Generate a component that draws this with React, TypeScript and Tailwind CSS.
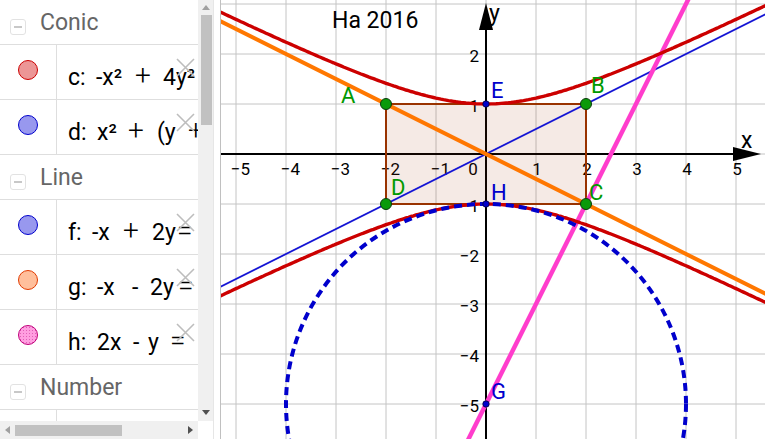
import React from "react";

const X = (x: number) => 486 + 50 * x;
const Y = (y: number) => 154 - 50 * y;

const hyperbola = (sign: number) => {
  const pts: string[] = [];
  for (let x = -5.5; x <= 5.7; x += 0.05) {
    const y = sign * Math.sqrt(1 + (x * x) / 4);
    pts.push(`${X(x).toFixed(1)},${Y(y).toFixed(1)}`);
  }
  return "M" + pts.join(" L");
};

type Token = { t: string; w?: number; op?: boolean };

const Swatch = ({ kind }: { kind: string }) => {
  const cls: Record<string, string> = {
    red: "bg-[#ec9696] border-[#cc0000]",
    blue: "bg-[#9898ee] border-[#0000cc]",
    orange: "bg-[#ffbf9c] border-[#e23a00]",
    pink: "bg-[#ff9ee0] border-[#c0007a] bg-[radial-gradient(circle,#e060b8_0.7px,transparent_0.9px)] bg-[length:3px_3px]",
  };
  return <div className={`h-[20px] w-[20px] rounded-full border ${cls[kind]}`} />;
};

const DeleteX = () => (
  <svg className="absolute left-[176px] top-[13px]" width="19" height="19" viewBox="0 0 19 19">
    <path d="M1 1 L18 18 M18 1 L1 18" stroke="#bdbdbd" strokeWidth="1.6" />
  </svg>
);

const ItemRow = ({ kind, tokens }: { kind: string; tokens: Token[] }) => (
  <div className="relative flex h-[55px] border-b border-[#dedede]">
    <div className="flex w-[57px] shrink-0 items-start justify-center border-r border-[#dedede] pt-[15px] pr-[1px]">
      <Swatch kind={kind} />
    </div>
    <div className="flex flex-1 items-baseline overflow-hidden whitespace-nowrap pl-[11px] pt-[17px] text-[23px] leading-[28px] text-black">
      {tokens.map((tk, i) => (
        <span
          key={i}
          className={tk.op ? "inline-block shrink-0 text-[28px] font-light" : "inline-block shrink-0"}
          style={tk.w ? { width: tk.w } : undefined}
        >
          {tk.t}
        </span>
      ))}
    </div>
    <DeleteX />
  </div>
);

const Header = ({ label }: { label: string }) => (
  <div className="flex h-[45px] items-start border-b border-[#dedede] pt-[8px]">
    <div className="ml-[10px] mt-[11px] flex h-[16px] w-[16px] items-center justify-center rounded-[3px] border border-[#e2e2e2]">
      <div className="h-[1.5px] w-[8px] bg-[#c8c8c8]" />
    </div>
    <span className="ml-[14px] text-[23px] leading-[29px] text-[#666666]">{label}</span>
  </div>
);

const Graphics = () => {
  const vx = [236, 286, 336, 386, 436, 486, 536, 586, 636, 686, 736];
  const hy = [4, 54, 104, 154, 204, 254, 304, 354, 404];
  const xLabels = [-5, -4, -3, -2, -1, 1, 2, 3, 4, 5];
  const yLabels = [2, 1, -1, -2, -3, -4, -5];
  return (
    <svg width="544" height="439" viewBox="221 0 544 439" className="block bg-white" style={{ fontFamily: "Roboto, 'Noto Sans', sans-serif" }}>
      {vx.map((x) => (
        <line key={"v" + x} x1={x} y1={0} x2={x} y2={439} stroke="#c4c4c4" strokeWidth="1" />
      ))}
      {hy.map((y) => (
        <line key={"h" + y} x1={221} y1={y} x2={765} y2={y} stroke="#c4c4c4" strokeWidth="1" />
      ))}
      {/* axes */}
      <line x1={221} y1={154} x2={740} y2={154} stroke="#000" strokeWidth="2" />
      <polygon points="761,154 733,147 733,161" fill="#000" />
      <line x1={486} y1={439} x2={486} y2={24} stroke="#000" strokeWidth="2" />
      <polygon points="486,3 479,30 493,30" fill="#000" />
      {xLabels.map((v) => (
        <text key={"xl" + v} x={X(v) + (v < 0 ? 4.5 : 1)} y={175} fontSize="17" textAnchor="middle" fill="#000">
          {v < 0 ? "\u2212" + -v : v}
        </text>
      ))}
      <text x={473} y={175} fontSize="17" textAnchor="middle" fill="#000">0</text>
      {yLabels.map((v) => (
        <text key={"yl" + v} x={479} y={Y(v) + 8} fontSize="17" textAnchor="end" fill="#000">
          {v < 0 ? "\u2212" + -v : v}
        </text>
      ))}
      <text x={489} y={21} fontSize="23" fill="#000">y</text>
      <text x={741} y={148} fontSize="23" fill="#000">x</text>
      <text x={332} y={28} fontSize="23" fill="#000">Ha 2016</text>

      {/* rectangle ABCD */}
      <polygon points={`${X(-2)},${Y(1)} ${X(2)},${Y(1)} ${X(2)},${Y(-1)} ${X(-2)},${Y(-1)}`} fill="rgba(153,51,0,0.1)" stroke="#993300" strokeWidth="2" />

      {/* lines */}
      <line x1={X(-5.5)} y1={Y(-2.75)} x2={X(5.6)} y2={Y(2.8)} stroke="#1414d4" strokeWidth="1.8" />
      <line x1={X(-5.5)} y1={Y(2.75)} x2={X(5.6)} y2={Y(-2.8)} stroke="#ff7700" strokeWidth="4" />
      <line x1={X(4.2)} y1={Y(3.4)} x2={X(-0.5)} y2={Y(-6)} stroke="#ff3dcc" strokeWidth="4.5" />

      {/* conics */}
      <path d={hyperbola(1)} fill="none" stroke="#cc0000" strokeWidth="3.4" />
      <path d={hyperbola(-1)} fill="none" stroke="#cc0000" strokeWidth="3.4" />
      <circle cx={X(0)} cy={Y(-5)} r={200} fill="none" stroke="#0000cc" strokeWidth="4" strokeDasharray="8 5" />

      {/* points */}
      {[[-2, 1], [2, 1], [2, -1], [-2, -1]].map(([x, y]) => (
        <circle key={`p${x}${y}`} cx={X(x)} cy={Y(y)} r={5.5} fill="#0a9a0a" stroke="#0b3b0b" strokeWidth="1" />
      ))}
      {[[0, 1], [0, -1], [0, -5]].map(([x, y]) => (
        <circle key={`q${x}${y}`} cx={X(x)} cy={Y(y)} r={3.2} fill="#0000cc" stroke="#000033" strokeWidth="0.8" />
      ))}
      <g fontSize="22" fill="#009900">
        <text x={341} y={103}>A</text>
        <text x={591} y={93}>B</text>
        <text x={589} y={200}>C</text>
        <text x={391} y={195}>D</text>
      </g>
      <g fontSize="22" fill="#0000cc">
        <text x={491} y={98}>E</text>
        <text x={491} y={200}>H</text>
        <text x={491} y={399}>G</text>
      </g>
    </svg>
  );
};

export default function App() {
  return (
    <div className="flex h-[439px] w-[765px] overflow-hidden bg-white" style={{ fontFamily: "Roboto, 'Noto Sans', sans-serif" }}>
      <div className="flex w-[213px] shrink-0 flex-col">
        <div className="flex h-[421px]">
          <div className="w-[198px] overflow-hidden">
            <Header label="Conic" />
            <ItemRow kind="red" tokens={[{ t: "c:", w: 28 }, { t: "-x²", w: 39 }, { t: "+", w: 28, op: true }, { t: "4y²" }]} />
            <ItemRow kind="blue" tokens={[{ t: "d:", w: 29 }, { t: "x²", w: 31 }, { t: "+", w: 29, op: true }, { t: "(y", w: 31 }, { t: "+", op: true }]} />
            <Header label="Line" />
            <ItemRow kind="blue" tokens={[{ t: "f:", w: 24 }, { t: "-x", w: 31 }, { t: "+", w: 29, op: true }, { t: "2y", w: 25 }, { t: "=", op: true }]} />
            <ItemRow kind="orange" tokens={[{ t: "g:", w: 29 }, { t: "-x", w: 35 }, { t: "-", w: 18 }, { t: "2y", w: 28 }, { t: "=", op: true }]} />
            <ItemRow kind="pink" tokens={[{ t: "h:", w: 29 }, { t: "2x", w: 36 }, { t: "-", w: 15 }, { t: "y", w: 22 }, { t: "=", op: true }]} />
            <Header label="Number" />
            <div className="h-[20px] w-[57px] border-r border-[#dedede]" />
          </div>
          <div className="flex w-[15px] flex-col items-center bg-[#f0f0f0]">
            <div className="mt-[5px] h-0 w-0 border-x-[4px] border-b-[5px] border-x-transparent border-b-[#a0a0a0]" />
            <div className="mt-[5px] ml-[1px] h-[110px] w-[11px] bg-[#c1c1c1]" />
            <div className="flex-1" />
            <div className="mb-[6px] h-0 w-0 border-x-[4px] border-t-[5px] border-x-transparent border-t-[#505050]" />
          </div>
        </div>
        <div className="flex h-[18px]">
          <div className="flex w-[198px] items-center bg-[#f0f0f0]">
            <div className="ml-[5px] h-0 w-0 border-y-[4px] border-r-[5px] border-y-transparent border-r-[#a0a0a0]" />
            <div className="ml-[5px] h-[11px] w-[107px] bg-[#c1c1c1]" />
            <div className="flex-1" />
            <div className="mr-[5px] h-0 w-0 border-y-[4px] border-l-[5px] border-y-transparent border-l-[#505050]" />
          </div>
          <div className="w-[15px] bg-white" />
        </div>
      </div>
      <div className="w-[8px] shrink-0 border-l border-r border-l-[#e6e6e6] border-r-[#c0c0c0] bg-white" />
      <Graphics />
    </div>
  );
}
